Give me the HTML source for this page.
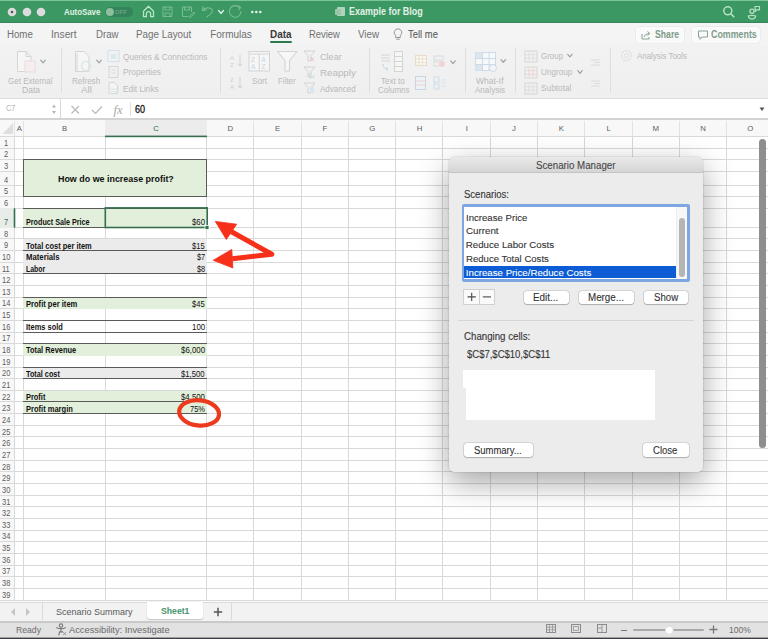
<!DOCTYPE html>
<html><head><meta charset="utf-8"><style>
html,body{margin:0;padding:0;width:768px;height:639px;overflow:hidden;background:#fff}
body{position:relative;font-family:"Liberation Sans",sans-serif}
body>div,body>svg{position:absolute}
.t{white-space:nowrap;line-height:1}
</style></head><body>
<div style="left:0px;top:0px;width:768px;height:23px;background:#3b9863"></div>
<div style="left:0px;top:0px;width:768px;height:1px;background:#7cc499"></div>
<svg style="left:7.1px;top:7px;" width="10" height="10" viewBox="0 0 10 10"><circle cx="5" cy="5" r="4.3" fill="#dcdcdc"/></svg>
<svg style="left:22px;top:7px;" width="10" height="10" viewBox="0 0 10 10"><circle cx="5" cy="5" r="4.3" fill="#dcdcdc"/></svg>
<svg style="left:36.4px;top:7px;" width="10" height="10" viewBox="0 0 10 10"><circle cx="5" cy="5" r="4.3" fill="#dcdcdc"/></svg>
<svg style="left:7.1px;top:7px;" width="10" height="10" viewBox="0 0 10 10"><circle cx="5" cy="5" r="1.3" fill="#555"/></svg>
<div style="left:0px;top:21.5px;width:768px;height:1.5px;background:#368659"></div>
<div class="t" style="left:64px;top:7.70px;font-size:9px;font-weight:bold;color:#e3f1e8;transform:scaleX(0.8769);transform-origin:left center;">AutoSave</div>
<div style="left:0px;top:23px;width:768px;height:22px;background:#f4f4f4"></div>
<div class="t" style="left:6.8px;top:29.82px;font-size:10px;font-weight:normal;color:#707070;transform:scaleX(0.9672);transform-origin:left center;">Home</div>
<div class="t" style="left:51.2px;top:29.82px;font-size:10px;font-weight:normal;color:#707070;transform:scaleX(1.0236);transform-origin:left center;">Insert</div>
<div class="t" style="left:95.6px;top:29.82px;font-size:10px;font-weight:normal;color:#707070;transform:scaleX(0.9642);transform-origin:left center;">Draw</div>
<div class="t" style="left:136.25px;top:29.82px;font-size:10px;font-weight:normal;color:#707070;transform:scaleX(0.9838);transform-origin:left center;">Page Layout</div>
<div class="t" style="left:210.2px;top:29.82px;font-size:10px;font-weight:normal;color:#707070;">Formulas</div>
<div class="t" style="left:270.1px;top:29.82px;font-size:10px;font-weight:bold;color:#3a3a3a;transform:scaleX(0.9919);transform-origin:left center;">Data</div>
<div class="t" style="left:309.4px;top:29.82px;font-size:10px;font-weight:normal;color:#707070;transform:scaleX(0.9424);transform-origin:left center;">Review</div>
<div class="t" style="left:358.4px;top:29.82px;font-size:10px;font-weight:normal;color:#707070;transform:scaleX(0.9781);transform-origin:left center;">View</div>
<div class="t" style="left:408.2px;top:29.82px;font-size:10px;font-weight:normal;color:#505050;transform:scaleX(0.9456);transform-origin:left center;">Tell me</div>
<div style="left:270px;top:41px;width:22px;height:2px;background:#2e7a4f;border-radius:1px"></div>
<div style="left:0px;top:45px;width:768px;height:54px;background:linear-gradient(#f2f2f2,#efefef)"></div>
<div style="left:0px;top:98px;width:768px;height:1px;background:#dcdcdc"></div>
<div style="left:0px;top:99px;width:768px;height:20px;background:#ffffff"></div>
<div style="left:0px;top:118px;width:768px;height:2px;background:#d3d3d3"></div>
<div style="left:0px;top:120px;width:768px;height:16px;background:#f8f8f8"></div>
<div style="left:0px;top:136px;width:15px;height:465px;background:#f8f8f8"></div>
<svg style="left:0px;top:0px;" width="768" height="639" viewBox="0 0 768 639"><rect x="14" y="136" width="1" height="465" fill="#d9d9d9"/><rect x="14" y="121" width="1" height="15" fill="#e3e3e3"/><rect x="23" y="136" width="1" height="465" fill="#d9d9d9"/><rect x="23" y="121" width="1" height="15" fill="#e3e3e3"/><rect x="105" y="136" width="1" height="465" fill="#d9d9d9"/><rect x="105" y="121" width="1" height="15" fill="#e3e3e3"/><rect x="206" y="136" width="1" height="465" fill="#d9d9d9"/><rect x="206" y="121" width="1" height="15" fill="#e3e3e3"/><rect x="253" y="136" width="1" height="465" fill="#d9d9d9"/><rect x="253" y="121" width="1" height="15" fill="#e3e3e3"/><rect x="301" y="136" width="1" height="465" fill="#d9d9d9"/><rect x="301" y="121" width="1" height="15" fill="#e3e3e3"/><rect x="348" y="136" width="1" height="465" fill="#d9d9d9"/><rect x="348" y="121" width="1" height="15" fill="#e3e3e3"/><rect x="395" y="136" width="1" height="465" fill="#d9d9d9"/><rect x="395" y="121" width="1" height="15" fill="#e3e3e3"/><rect x="442" y="136" width="1" height="465" fill="#d9d9d9"/><rect x="442" y="121" width="1" height="15" fill="#e3e3e3"/><rect x="490" y="136" width="1" height="465" fill="#d9d9d9"/><rect x="490" y="121" width="1" height="15" fill="#e3e3e3"/><rect x="537" y="136" width="1" height="465" fill="#d9d9d9"/><rect x="537" y="121" width="1" height="15" fill="#e3e3e3"/><rect x="584" y="136" width="1" height="465" fill="#d9d9d9"/><rect x="584" y="121" width="1" height="15" fill="#e3e3e3"/><rect x="632" y="136" width="1" height="465" fill="#d9d9d9"/><rect x="632" y="121" width="1" height="15" fill="#e3e3e3"/><rect x="679" y="136" width="1" height="465" fill="#d9d9d9"/><rect x="679" y="121" width="1" height="15" fill="#e3e3e3"/><rect x="726" y="136" width="1" height="465" fill="#d9d9d9"/><rect x="726" y="121" width="1" height="15" fill="#e3e3e3"/><rect x="773" y="136" width="1" height="465" fill="#d9d9d9"/><rect x="773" y="121" width="1" height="15" fill="#e3e3e3"/><rect x="0" y="136" width="768" height="1" fill="#d9d9d9"/><rect x="0" y="148" width="768" height="1" fill="#d9d9d9"/><rect x="0" y="159" width="768" height="1" fill="#d9d9d9"/><rect x="0" y="171" width="768" height="1" fill="#d9d9d9"/><rect x="0" y="185" width="768" height="1" fill="#d9d9d9"/><rect x="0" y="196" width="768" height="1" fill="#d9d9d9"/><rect x="0" y="208" width="768" height="1" fill="#d9d9d9"/><rect x="0" y="227" width="768" height="1" fill="#d9d9d9"/><rect x="0" y="238" width="768" height="1" fill="#d9d9d9"/><rect x="0" y="250" width="768" height="1" fill="#d9d9d9"/><rect x="0" y="262" width="768" height="1" fill="#d9d9d9"/><rect x="0" y="273" width="768" height="1" fill="#d9d9d9"/><rect x="0" y="285" width="768" height="1" fill="#d9d9d9"/><rect x="0" y="297" width="768" height="1" fill="#d9d9d9"/><rect x="0" y="308" width="768" height="1" fill="#d9d9d9"/><rect x="0" y="320" width="768" height="1" fill="#d9d9d9"/><rect x="0" y="332" width="768" height="1" fill="#d9d9d9"/><rect x="0" y="343" width="768" height="1" fill="#d9d9d9"/><rect x="0" y="355" width="768" height="1" fill="#d9d9d9"/><rect x="0" y="367" width="768" height="1" fill="#d9d9d9"/><rect x="0" y="378" width="768" height="1" fill="#d9d9d9"/><rect x="0" y="390" width="768" height="1" fill="#d9d9d9"/><rect x="0" y="401" width="768" height="1" fill="#d9d9d9"/><rect x="0" y="413" width="768" height="1" fill="#d9d9d9"/><rect x="0" y="425" width="768" height="1" fill="#d9d9d9"/><rect x="0" y="436" width="768" height="1" fill="#d9d9d9"/><rect x="0" y="448" width="768" height="1" fill="#d9d9d9"/><rect x="0" y="460" width="768" height="1" fill="#d9d9d9"/><rect x="0" y="471" width="768" height="1" fill="#d9d9d9"/><rect x="0" y="483" width="768" height="1" fill="#d9d9d9"/><rect x="0" y="495" width="768" height="1" fill="#d9d9d9"/><rect x="0" y="506" width="768" height="1" fill="#d9d9d9"/><rect x="0" y="518" width="768" height="1" fill="#d9d9d9"/><rect x="0" y="530" width="768" height="1" fill="#d9d9d9"/><rect x="0" y="541" width="768" height="1" fill="#d9d9d9"/><rect x="0" y="553" width="768" height="1" fill="#d9d9d9"/><rect x="0" y="565" width="768" height="1" fill="#d9d9d9"/><rect x="0" y="576" width="768" height="1" fill="#d9d9d9"/><rect x="0" y="588" width="768" height="1" fill="#d9d9d9"/><rect x="0" y="600" width="768" height="1" fill="#d9d9d9"/></svg>
<div style="left:0px;top:601px;width:768px;height:1px;background:#fbfbfb"></div>
<div style="left:0px;top:603px;width:768px;height:18px;background:#f2f2f2"></div>
<div style="left:0px;top:602px;width:768px;height:1px;background:#dadada"></div>
<div style="left:0px;top:621px;width:768px;height:18px;background:linear-gradient(#e1e1e1,#e3e3e3)"></div>
<div style="left:0px;top:621px;width:768px;height:1.6px;background:#c9c9c9"></div>
<svg style="left:0px;top:636px;" width="768" height="3" viewBox="0 0 768 3"><rect x="0" y="1.6" width="768" height="1.4" fill="#3d3d45"/></svg>
<div style="left:105.2px;top:7px;width:28px;height:10.2px;background:#33845a;border-radius:5.1px"></div>
<svg style="left:105.2px;top:7px;" width="29" height="11" viewBox="0 0 29 11"><circle cx="4.9" cy="5.1" r="4" fill="#8fbf9f"/></svg>
<div class="t" style="left:115px;top:9.27px;font-size:6px;font-weight:bold;color:#6fa384;">OFF</div>
<svg style="left:141px;top:4px;" width="15" height="15" viewBox="0 0 15 15"><path d="M2.5 7.3 L7.5 2.3 L12.5 7.3 V12.7 H9.6 V9.8 A2.1 2.1 0 0 0 5.4 9.8 V12.7 H2.5 Z" fill="none" stroke="#b9e6c8" stroke-width="1.25" stroke-linejoin="round"/></svg>
<svg style="left:160px;top:4px;" width="15" height="15" viewBox="0 0 15 15"><path d="M3 3 H12 V12.5 H3 Z M5 3 V6 H10 V3 M5 12.5 V9 H10 V12.5" fill="none" stroke="#8cc9a2" stroke-width="1" stroke-linejoin="round" opacity="0.75"/></svg>
<svg style="left:180px;top:4px;" width="15" height="15" viewBox="0 0 15 15"><path d="M2.5 3 H11.5 V8 M8 12.5 H2.5 V3 M4.5 3 V6 H9.5 V3 M9 12.8 L13.8 8 L14.8 9 L10 13.8 Z" fill="none" stroke="#8cc9a2" stroke-width="1" stroke-linejoin="round" opacity="0.75"/></svg>
<svg style="left:199px;top:4px;" width="16" height="15" viewBox="0 0 16 15"><path d="M4 2.5 L3.5 6.5 L7.5 6 M3.7 6.3 C6 3.5 10.5 3 13 5.5 C14 7.5 12 10.5 7.5 13" fill="none" stroke="#8cc9a2" stroke-width="1.1" stroke-linecap="round" stroke-linejoin="round" opacity="0.75"/></svg>
<svg style="left:217px;top:8px;" width="8" height="8" viewBox="0 0 8 8"><polyline points="1.7000000000000002,2.62 4,5.38 6.3,2.62" fill="none" stroke="#e8f5ec" stroke-width="1.5" stroke-linecap="round" stroke-linejoin="round"/></svg>
<svg style="left:228px;top:4px;" width="16" height="15" viewBox="0 0 16 15"><path d="M13 7.5 A5.8 5.8 0 1 1 11.5 3.5 M10.2 1.8 L12.5 3.6 L10.5 5.8" fill="none" stroke="#8cc9a2" stroke-width="1.1" stroke-linecap="round" opacity="0.75"/></svg>
<svg style="left:249px;top:8px;" width="14" height="8" viewBox="0 0 14 8"><circle cx="3.3" cy="4" r="1.25" fill="#e8f5ec"/><circle cx="7.3" cy="4" r="1.25" fill="#e8f5ec"/><circle cx="11.3" cy="4" r="1.25" fill="#e8f5ec"/></svg>
<svg style="left:334px;top:5px;" width="13" height="13" viewBox="0 0 13 13"><rect x="3" y="2" width="8" height="9" rx="1" fill="#bcd9c6" opacity="0.9"/><rect x="1" y="4" width="6" height="6" rx="1" fill="#9cc6ab"/></svg>
<div class="t" style="left:349.2px;top:7.02px;font-size:10px;font-weight:bold;color:#e3f1e8;transform:scaleX(0.8974);transform-origin:left center;">Example for Blog</div>
<svg style="left:721px;top:4px;" width="15" height="15" viewBox="0 0 15 15"><circle cx="6.8" cy="6.8" r="4" fill="none" stroke="#b6e0c4" stroke-width="1.5"/><path d="M9.8 9.8 L12.8 12.8" stroke="#b6e0c4" stroke-width="1.6" stroke-linecap="round"/></svg>
<svg style="left:745px;top:3px;" width="17" height="17" viewBox="0 0 17 17"><circle cx="7" cy="8.3" r="2.1" fill="none" stroke="#b6e0c4" stroke-width="1.3"/><path d="M3.3 13 Q7 11.6 10.7 13 Q10.4 16 7 16 Q3.6 16 3.3 13 Z" fill="none" stroke="#b6e0c4" stroke-width="1.3"/><path d="M10 3.5 H14.5 V6.8 H11.8 L10.3 8.3 Z" fill="none" stroke="#b6e0c4" stroke-width="1.2" stroke-linejoin="round"/></svg>
<svg style="left:392px;top:27px;" width="12" height="14" viewBox="0 0 12 14"><path d="M6 1.8 A3.8 3.8 0 0 1 8.3 8.6 V10.5 H3.7 V8.6 A3.8 3.8 0 0 1 6 1.8 Z M4.3 12.2 H7.7" fill="none" stroke="#8a8a8a" stroke-width="0.9"/></svg>
<div style="left:636.4px;top:26.7px;width:47.2px;height:16.4px;background:#fafafa;border-radius:3px;box-shadow:0 0 0 0.5px #e2e2e2"></div>
<svg style="left:640px;top:29px;" width="12" height="12" viewBox="0 0 12 12"><path d="M2 5 V10 H9 V8 M4 8 Q5 4.5 9.5 4.5 M7.5 2.5 L9.8 4.5 L7.5 6.5" fill="none" stroke="#87a292" stroke-width="1"/></svg>
<div class="t" style="left:654.7px;top:30.12px;font-size:10px;font-weight:bold;color:#7f9b8a;transform:scaleX(0.8671);transform-origin:left center;">Share</div>
<div style="left:692.3px;top:26.7px;width:68px;height:16.4px;background:#fafafa;border-radius:3px;box-shadow:0 0 0 0.5px #e2e2e2"></div>
<svg style="left:697px;top:29px;" width="12" height="12" viewBox="0 0 12 12"><path d="M1.5 2 H10.5 V8 H5 L3 10.3 V8 H1.5 Z" fill="none" stroke="#87a292" stroke-width="1" stroke-linejoin="round"/></svg>
<div class="t" style="left:710.6px;top:30.12px;font-size:10px;font-weight:bold;color:#7f9b8a;transform:scaleX(0.8863);transform-origin:left center;">Comments</div>
<div style="left:61px;top:48px;width:1px;height:45px;background:#dedede"></div>
<div style="left:220px;top:48px;width:1px;height:45px;background:#dedede"></div>
<div style="left:368.5px;top:48px;width:1px;height:45px;background:#dedede"></div>
<div style="left:465px;top:48px;width:1px;height:45px;background:#dedede"></div>
<div style="left:515px;top:48px;width:1px;height:45px;background:#dedede"></div>
<div style="left:610px;top:48px;width:1px;height:45px;background:#dedede"></div>
<svg style="left:14px;top:50px;opacity:0.8;" width="34" height="24" viewBox="0 0 34 24"><path d="M3.5 1.5 H12 L17 6.5 V21.5 H3.5 Z M12 1.5 V6.5 H17" fill="#f7f7f7" stroke="#cfcfcf" stroke-width="1"/><rect x="11" y="11" width="10" height="11" fill="#f7eeee" stroke="#e6d2d2" stroke-width="0.8"/><polyline points="26.7,10.120000000000001 29,12.879999999999999 31.3,10.120000000000001" fill="none" stroke="#8d8d8d" stroke-width="1.2" stroke-linecap="round" stroke-linejoin="round"/></svg>
<div class="t" style="left:7.5px;top:77.40px;font-size:9px;font-weight:normal;color:#b9b9b9;transform:scaleX(0.8896);transform-origin:left center;">Get External</div>
<div class="t" style="left:22px;top:86.10px;font-size:9px;font-weight:normal;color:#b9b9b9;transform:scaleX(0.9468);transform-origin:left center;">Data</div>
<svg style="left:72px;top:50px;opacity:0.8;" width="34" height="24" viewBox="0 0 34 24"><path d="M5 3.5 V21 M3.5 1.5 H12 L17 6.5 V21.5 H3.5 Z" fill="#f7f7f7" stroke="#cfcfcf" stroke-width="1"/><circle cx="14" cy="16" r="4.5" fill="none" stroke="#d7e6dc" stroke-width="1.6"/><polyline points="24.7,10.120000000000001 27,12.879999999999999 29.3,10.120000000000001" fill="none" stroke="#8d8d8d" stroke-width="1.2" stroke-linecap="round" stroke-linejoin="round"/></svg>
<div class="t" style="left:71.9px;top:77.40px;font-size:9px;font-weight:normal;color:#b9b9b9;transform:scaleX(0.8917);transform-origin:left center;">Refresh</div>
<div class="t" style="left:80.5px;top:86.10px;font-size:9px;font-weight:normal;color:#b9b9b9;transform:scaleX(1.0998);transform-origin:left center;">All</div>
<svg style="left:106px;top:49px;opacity:0.8;" width="16" height="46" viewBox="0 0 16 46"><rect x="2" y="1.5" width="11" height="11" fill="#eef4f8" stroke="#cfdde6" stroke-width="1"/><rect x="5" y="5" width="5" height="5" fill="#d9e6ee"/><rect x="3" y="17.5" width="9" height="11" fill="none" stroke="#d0d0d0" stroke-width="1"/><path d="M5.5 21 H9.5 M5.5 24 H9.5" stroke="#d8d8d8"/><path d="M3 33.5 H8.5 L11.5 36.5 V44.5 H3 Z" fill="#f4f6f8" stroke="#d0d0d0" stroke-width="1"/><path d="M4.5 40 H13 M4.5 42.5 H13" stroke="#d6e0e8"/></svg>
<div class="t" style="left:123.4px;top:52.60px;font-size:9px;font-weight:normal;color:#b9b9b9;transform:scaleX(0.9120);transform-origin:left center;">Queries &amp; Connections</div>
<div class="t" style="left:123.4px;top:68.40px;font-size:9px;font-weight:normal;color:#b9b9b9;transform:scaleX(0.9264);transform-origin:left center;">Properties</div>
<div class="t" style="left:123.4px;top:84.60px;font-size:9px;font-weight:normal;color:#b9b9b9;transform:scaleX(0.9124);transform-origin:left center;">Edit Links</div>
<svg style="left:229px;top:52px;opacity:0.8;" width="16" height="40" viewBox="0 0 16 40"><text x="1" y="8" font-size="6" fill="#c8c8c8" font-family="Liberation Sans">A</text><text x="1" y="14.5" font-size="6" fill="#c8c8c8" font-family="Liberation Sans">Z</text><path d="M11 3 V14 M8.8 11.5 L11 14 L13.2 11.5" fill="none" stroke="#c6c6c6" stroke-width="0.9"/><text x="1" y="30" font-size="6" fill="#c8c8c8" font-family="Liberation Sans">Z</text><text x="1" y="36.5" font-size="6" fill="#c8c8c8" font-family="Liberation Sans">A</text><path d="M11 25 V36 M8.8 33.5 L11 36 L13.2 33.5" fill="none" stroke="#c6c6c6" stroke-width="0.9"/></svg>
<svg style="left:248px;top:50px;opacity:0.8;" width="23" height="23" viewBox="0 0 23 23"><rect x="1" y="1.5" width="20.5" height="19.5" fill="#f8f8f8" stroke="#cdcdcd" stroke-width="1"/><path d="M1 4 H21.5 M11.25 4 V21" stroke="#cdcdcd" stroke-width="1"/><text x="3" y="12" font-size="6.5" fill="#c9c9c9" font-family="Liberation Sans">Z</text><text x="3" y="19" font-size="6.5" fill="#bcd2e4" font-family="Liberation Sans">A</text><text x="13.5" y="12" font-size="6.5" fill="#bcd2e4" font-family="Liberation Sans">A</text><text x="13.5" y="19" font-size="6.5" fill="#c9c9c9" font-family="Liberation Sans">Z</text></svg>
<div class="t" style="left:251.5px;top:77.40px;font-size:9px;font-weight:normal;color:#b9b9b9;transform:scaleX(0.9148);transform-origin:left center;">Sort</div>
<svg style="left:276px;top:50px;opacity:0.8;" width="23" height="23" viewBox="0 0 23 23"><path d="M1.5 1.5 H21 L13.5 10.5 V21 H9 V10.5 Z" fill="#f9f9f9" stroke="#cdcdcd" stroke-width="1.1" stroke-linejoin="round"/></svg>
<div class="t" style="left:277.9px;top:77.40px;font-size:9px;font-weight:normal;color:#b9b9b9;transform:scaleX(0.8850);transform-origin:left center;">Filter</div>
<svg style="left:303px;top:50px;opacity:0.8;" width="14" height="44" viewBox="0 0 14 44"><path d="M1 1 H12 L8 5.5 V11 H5 V5.5 Z" fill="none" stroke="#cdcdcd" stroke-width="1"/><path d="M7.5 7.5 L11 11 M11 7.5 L7.5 11" stroke="#eab0b0" stroke-width="1"/><path d="M1 17 H12 L8 21.5 V27 H5 V21.5 Z" fill="none" stroke="#cdcdcd" stroke-width="1"/><path d="M8 23 A2.5 2.5 0 1 0 11 25" fill="none" stroke="#b9d6c3" stroke-width="1"/><path d="M1 33 H12 L8 37.5 V43 H5 V37.5 Z" fill="none" stroke="#cdcdcd" stroke-width="1"/><rect x="7" y="37" width="4" height="6" fill="#d5e3ee"/></svg>
<div class="t" style="left:320.2px;top:52.80px;font-size:9px;font-weight:normal;color:#b9b9b9;transform:scaleX(1.0136);transform-origin:left center;">Clear</div>
<div class="t" style="left:320.2px;top:68.70px;font-size:9px;font-weight:normal;color:#b9b9b9;transform:scaleX(1.0842);transform-origin:left center;">Reapply</div>
<div class="t" style="left:320.2px;top:84.70px;font-size:9px;font-weight:normal;color:#b9b9b9;transform:scaleX(0.8943);transform-origin:left center;">Advanced</div>
<svg style="left:379px;top:50px;opacity:0.8;" width="28" height="23" viewBox="0 0 28 23"><path d="M2 5 H11 M2 8 H11 M2 11 H11" stroke="#d0d0d0" stroke-width="1"/><path d="M4 14 Q4 19 9 19 M7 17 L9 19 L7 21" fill="none" stroke="#bcd3e2" stroke-width="1"/><rect x="15.5" y="1.5" width="8" height="20" fill="#f8f8f8" stroke="#cdcdcd" stroke-width="1"/><path d="M15.5 6.5 H23.5 M15.5 11.5 H23.5 M15.5 16.5 H23.5" stroke="#cdcdcd"/></svg>
<div class="t" style="left:381px;top:77.20px;font-size:9px;font-weight:normal;color:#b9b9b9;transform:scaleX(0.8942);transform-origin:left center;">Text to</div>
<div class="t" style="left:377.5px;top:85.60px;font-size:9px;font-weight:normal;color:#b9b9b9;transform:scaleX(0.8870);transform-origin:left center;">Columns</div>
<svg style="left:413px;top:52px;opacity:0.8;" width="46" height="40" viewBox="0 0 46 40"><rect x="2.5" y="3.5" width="11" height="10" fill="#fbf7ef" stroke="#e6d7bf" stroke-width="1"/><path d="M2.5 7 H13.5 M2.5 10.5 H13.5 M6 3.5 V13.5 M9.5 3.5 V13.5" stroke="#e6d7bf" stroke-width="0.7"/><rect x="21" y="4" width="9" height="4" fill="none" stroke="#d6d6d6"/><rect x="21" y="10" width="9" height="4" fill="none" stroke="#d6d6d6"/><circle cx="29" cy="12" r="3" fill="#f1cfcf"/><polyline points="37.7,8.920000000000002 40,11.68 42.3,8.920000000000002" fill="none" stroke="#8d8d8d" stroke-width="1.2" stroke-linecap="round" stroke-linejoin="round"/><rect x="2.5" y="24.5" width="10" height="13" fill="#eef3f8" stroke="#bcd0e2" stroke-width="1"/><path d="M2.5 29 H12.5 M2.5 33 H12.5" stroke="#e8c0c0" stroke-width="0.8"/><rect x="21" y="25" width="5" height="5" fill="none" stroke="#c8d8e8"/><rect x="21" y="32" width="5" height="5" fill="none" stroke="#c8d8e8"/><path d="M28 28 H33 M28 31 H33 M28 34 H33" stroke="#d8e0e8"/></svg>
<svg style="left:474px;top:51px;opacity:0.8;" width="34" height="23" viewBox="0 0 34 23"><rect x="1.5" y="1.5" width="20" height="18" fill="#f8fafc" stroke="#c6d6e4" stroke-width="1"/><rect x="1.5" y="1.5" width="7" height="6" fill="#d5e3ef"/><rect x="1.5" y="13.5" width="7" height="6" fill="#d5e3ef"/><path d="M1.5 7.5 H21.5 M1.5 13.5 H21.5 M8.5 1.5 V19.5 M15 1.5 V19.5" stroke="#c6d6e4" stroke-width="1"/><circle cx="19" cy="17" r="3.5" fill="#f4f6f8" stroke="#c6d6e4"/><polyline points="27.0,8.620000000000001 29.3,11.379999999999999 31.6,8.620000000000001" fill="none" stroke="#8d8d8d" stroke-width="1.2" stroke-linecap="round" stroke-linejoin="round"/></svg>
<div class="t" style="left:476px;top:77.20px;font-size:9px;font-weight:normal;color:#b9b9b9;transform:scaleX(0.9516);transform-origin:left center;">What-If</div>
<div class="t" style="left:474.8px;top:85.60px;font-size:9px;font-weight:normal;color:#b9b9b9;transform:scaleX(0.8952);transform-origin:left center;">Analysis</div>
<svg style="left:523px;top:49px;opacity:0.8;" width="16" height="46" viewBox="0 0 16 46"><rect x="2" y="2" width="12" height="11" fill="none" stroke="#d0d0d0"/><path d="M2 5.7 H14 M2 9.3 H14 M6 2 V13 M10 2 V13" stroke="#d8d8d8" stroke-width="0.8"/><rect x="2" y="18" width="12" height="11" fill="none" stroke="#d4d4d4"/><path d="M2 21.7 H14 M2 25.3 H14 M6 18 V29 M10 18 V29" stroke="#ecc8c8" stroke-width="0.8"/><rect x="2" y="34" width="12" height="11" fill="none" stroke="#d0d0d0"/><path d="M2 37.7 H14 M2 41.3 H14 M6 34 V45 M10 34 V45" stroke="#d8d8d8" stroke-width="0.8"/></svg>
<div class="t" style="left:541px;top:52.00px;font-size:9px;font-weight:normal;color:#b9b9b9;transform:scaleX(0.8875);transform-origin:left center;">Group</div>
<div class="t" style="left:541px;top:68.40px;font-size:9px;font-weight:normal;color:#b9b9b9;transform:scaleX(0.9066);transform-origin:left center;">Ungroup</div>
<div class="t" style="left:541px;top:84.40px;font-size:9px;font-weight:normal;color:#b9b9b9;transform:scaleX(0.9205);transform-origin:left center;">Subtotal</div>
<svg style="left:565px;top:51px;opacity:0.8;" width="20" height="26" viewBox="0 0 20 26"><polyline points="2.7,3.2799999999999994 4.9,5.92 7.1000000000000005,3.2799999999999994" fill="none" stroke="#8d8d8d" stroke-width="1.2" stroke-linecap="round" stroke-linejoin="round"/><polyline points="12.8,19.68 15,22.32 17.2,19.68" fill="none" stroke="#8d8d8d" stroke-width="1.2" stroke-linecap="round" stroke-linejoin="round"/></svg>
<svg style="left:588px;top:54px;opacity:0.8;" width="14" height="36" viewBox="0 0 14 36"><path d="M3 6 H12 M6 8.5 H12 M3 11 H12" stroke="#d4d4d4" stroke-width="0.9"/><path d="M3 27 H12 M6 29.5 H12 M3 32 H12" stroke="#d4d4d4" stroke-width="0.9"/></svg>
<svg style="left:619px;top:48px;opacity:0.8;" width="15" height="15" viewBox="0 0 15 15"><circle cx="7.5" cy="7.5" r="5" fill="none" stroke="#dcdcdc" stroke-width="1.3" stroke-dasharray="2 1"/><circle cx="7.5" cy="7.5" r="2" fill="none" stroke="#dcdcdc"/></svg>
<div class="t" style="left:636.7px;top:51.50px;font-size:9px;font-weight:normal;color:#b9b9b9;transform:scaleX(0.8773);transform-origin:left center;">Analysis Tools</div>
<div class="t" style="left:6.3px;top:104.40px;font-size:9px;font-weight:normal;color:#b4b4b4;transform:scaleX(0.8084);transform-origin:left center;">C7</div>
<svg style="left:50px;top:101px;" width="8" height="16" viewBox="0 0 8 16"><path d="M2 6.5 L4 3.5 L6 6.5 Z M2 10 L4 13 L6 10 Z" fill="#b5b5b5"/></svg>
<div style="left:60px;top:99px;width:1px;height:19px;background:#d8d8d8"></div>
<svg style="left:70px;top:105px;" width="11" height="10" viewBox="0 0 11 10"><path d="M1.5 1 L9 8.5 M9 1 L1.5 8.5" stroke="#b9b9b9" stroke-width="1.2"/></svg>
<svg style="left:91px;top:105px;" width="12" height="10" viewBox="0 0 12 10"><path d="M1 5 L4.5 8.5 L11 1.5" fill="none" stroke="#b9b9b9" stroke-width="1.2"/></svg>
<div class="t" style="left:113.5px;top:103.89px;font-size:12.5px;font-weight:normal;color:#a9a9a9;font-family:'Liberation Serif',serif;font-style:italic;">fx</div>
<div style="left:129.5px;top:102px;width:1px;height:14px;background:#e0e0e0"></div>
<div class="t" style="left:135.2px;top:104.47px;font-size:10.5px;font-weight:normal;color:#151515;transform:scaleX(0.8648);transform-origin:left center;-webkit-text-stroke:0.3px #151515;">60</div>
<svg style="left:757px;top:104px;" width="10" height="10" viewBox="0 0 10 10"><path d="M2.5 3.5 H7.5 L5 7 Z" fill="#555"/></svg>
<svg style="left:0px;top:120px;" width="15" height="16" viewBox="0 0 15 16"><path d="M13 3 V14 H2.5 Z" fill="#dedede"/></svg>
<div style="left:105px;top:120px;width:102px;height:16px;background:#ececec"></div>
<div class="t" style="left:16.6987px;top:125.29px;font-size:7.8px;font-weight:normal;color:#5c5c5c;">A</div>
<div class="t" style="left:61.8987px;top:125.29px;font-size:7.8px;font-weight:normal;color:#5c5c5c;">B</div>
<div class="t" style="left:153.284px;top:125.29px;font-size:7.8px;font-weight:normal;color:#356f4e;">C</div>
<div class="t" style="left:227.619px;top:125.29px;font-size:7.8px;font-weight:normal;color:#5c5c5c;">D</div>
<div class="t" style="left:275.104px;top:125.29px;font-size:7.8px;font-weight:normal;color:#5c5c5c;">E</div>
<div class="t" style="left:322.593px;top:125.29px;font-size:7.8px;font-weight:normal;color:#5c5c5c;">F</div>
<div class="t" style="left:369.211px;top:125.29px;font-size:7.8px;font-weight:normal;color:#5c5c5c;">G</div>
<div class="t" style="left:416.699px;top:125.29px;font-size:7.8px;font-weight:normal;color:#5c5c5c;">H</div>
<div class="t" style="left:465.701px;top:125.29px;font-size:7.8px;font-weight:normal;color:#5c5c5c;">I</div>
<div class="t" style="left:512.105px;top:125.29px;font-size:7.8px;font-weight:normal;color:#5c5c5c;">J</div>
<div class="t" style="left:558.724px;top:125.29px;font-size:7.8px;font-weight:normal;color:#5c5c5c;">K</div>
<div class="t" style="left:606.426px;top:125.29px;font-size:7.8px;font-weight:normal;color:#5c5c5c;">L</div>
<div class="t" style="left:652.616px;top:125.29px;font-size:7.8px;font-weight:normal;color:#5c5c5c;">M</div>
<div class="t" style="left:700.319px;top:125.29px;font-size:7.8px;font-weight:normal;color:#5c5c5c;">N</div>
<div class="t" style="left:747.371px;top:125.29px;font-size:7.8px;font-weight:normal;color:#5c5c5c;">O</div>
<svg style="left:105px;top:134px;" width="102" height="4" viewBox="0 0 102 4"><rect x="0" y="1.6" width="102" height="1.6" fill="#356f4e"/></svg>
<div style="left:0px;top:208px;width:14px;height:20px;background:#e9ede9"></div>
<div class="t" style="left:4.21999px;top:138.80px;font-size:8.8px;font-weight:normal;color:#5c5c5c;transform:scaleX(0.8500);transform-origin:left center;">1</div>
<div class="t" style="left:4.21999px;top:150.00px;font-size:8.8px;font-weight:normal;color:#5c5c5c;transform:scaleX(0.8500);transform-origin:left center;">2</div>
<div class="t" style="left:4.21999px;top:162.10px;font-size:8.8px;font-weight:normal;color:#5c5c5c;transform:scaleX(0.8500);transform-origin:left center;">3</div>
<div class="t" style="left:4.21999px;top:176.10px;font-size:8.8px;font-weight:normal;color:#5c5c5c;transform:scaleX(0.8500);transform-origin:left center;">4</div>
<div class="t" style="left:4.21999px;top:187.30px;font-size:8.8px;font-weight:normal;color:#5c5c5c;transform:scaleX(0.8500);transform-origin:left center;">5</div>
<div class="t" style="left:4.21999px;top:198.90px;font-size:8.8px;font-weight:normal;color:#5c5c5c;transform:scaleX(0.8500);transform-origin:left center;">6</div>
<div class="t" style="left:4.21999px;top:217.90px;font-size:8.8px;font-weight:normal;color:#356f4e;transform:scaleX(0.8500);transform-origin:left center;">7</div>
<div class="t" style="left:4.21999px;top:229.55px;font-size:8.8px;font-weight:normal;color:#5c5c5c;transform:scaleX(0.8500);transform-origin:left center;">8</div>
<div class="t" style="left:4.21999px;top:241.20px;font-size:8.8px;font-weight:normal;color:#5c5c5c;transform:scaleX(0.8500);transform-origin:left center;">9</div>
<div class="t" style="left:2.13998px;top:252.85px;font-size:8.8px;font-weight:normal;color:#5c5c5c;transform:scaleX(0.8500);transform-origin:left center;">10</div>
<div class="t" style="left:2.13998px;top:264.50px;font-size:8.8px;font-weight:normal;color:#5c5c5c;transform:scaleX(0.8500);transform-origin:left center;">11</div>
<div class="t" style="left:2.13998px;top:276.15px;font-size:8.8px;font-weight:normal;color:#5c5c5c;transform:scaleX(0.8500);transform-origin:left center;">12</div>
<div class="t" style="left:2.13998px;top:287.80px;font-size:8.8px;font-weight:normal;color:#5c5c5c;transform:scaleX(0.8500);transform-origin:left center;">13</div>
<div class="t" style="left:2.13998px;top:299.45px;font-size:8.8px;font-weight:normal;color:#5c5c5c;transform:scaleX(0.8500);transform-origin:left center;">14</div>
<div class="t" style="left:2.13998px;top:311.10px;font-size:8.8px;font-weight:normal;color:#5c5c5c;transform:scaleX(0.8500);transform-origin:left center;">15</div>
<div class="t" style="left:2.13998px;top:322.75px;font-size:8.8px;font-weight:normal;color:#5c5c5c;transform:scaleX(0.8500);transform-origin:left center;">16</div>
<div class="t" style="left:2.13998px;top:334.40px;font-size:8.8px;font-weight:normal;color:#5c5c5c;transform:scaleX(0.8500);transform-origin:left center;">17</div>
<div class="t" style="left:2.13998px;top:346.05px;font-size:8.8px;font-weight:normal;color:#5c5c5c;transform:scaleX(0.8500);transform-origin:left center;">18</div>
<div class="t" style="left:2.13998px;top:357.70px;font-size:8.8px;font-weight:normal;color:#5c5c5c;transform:scaleX(0.8500);transform-origin:left center;">19</div>
<div class="t" style="left:2.13998px;top:369.35px;font-size:8.8px;font-weight:normal;color:#5c5c5c;transform:scaleX(0.8500);transform-origin:left center;">20</div>
<div class="t" style="left:2.13998px;top:381.00px;font-size:8.8px;font-weight:normal;color:#5c5c5c;transform:scaleX(0.8500);transform-origin:left center;">21</div>
<div class="t" style="left:2.13998px;top:392.65px;font-size:8.8px;font-weight:normal;color:#5c5c5c;transform:scaleX(0.8500);transform-origin:left center;">22</div>
<div class="t" style="left:2.13998px;top:404.30px;font-size:8.8px;font-weight:normal;color:#5c5c5c;transform:scaleX(0.8500);transform-origin:left center;">23</div>
<div class="t" style="left:2.13998px;top:415.95px;font-size:8.8px;font-weight:normal;color:#5c5c5c;transform:scaleX(0.8500);transform-origin:left center;">24</div>
<div class="t" style="left:2.13998px;top:427.60px;font-size:8.8px;font-weight:normal;color:#5c5c5c;transform:scaleX(0.8500);transform-origin:left center;">25</div>
<div class="t" style="left:2.13998px;top:439.25px;font-size:8.8px;font-weight:normal;color:#5c5c5c;transform:scaleX(0.8500);transform-origin:left center;">26</div>
<div class="t" style="left:2.13998px;top:450.90px;font-size:8.8px;font-weight:normal;color:#5c5c5c;transform:scaleX(0.8500);transform-origin:left center;">27</div>
<div class="t" style="left:2.13998px;top:462.55px;font-size:8.8px;font-weight:normal;color:#5c5c5c;transform:scaleX(0.8500);transform-origin:left center;">28</div>
<div class="t" style="left:2.13998px;top:474.20px;font-size:8.8px;font-weight:normal;color:#5c5c5c;transform:scaleX(0.8500);transform-origin:left center;">29</div>
<div class="t" style="left:2.13998px;top:485.85px;font-size:8.8px;font-weight:normal;color:#5c5c5c;transform:scaleX(0.8500);transform-origin:left center;">30</div>
<div class="t" style="left:2.13998px;top:497.50px;font-size:8.8px;font-weight:normal;color:#5c5c5c;transform:scaleX(0.8500);transform-origin:left center;">31</div>
<div class="t" style="left:2.13998px;top:509.15px;font-size:8.8px;font-weight:normal;color:#5c5c5c;transform:scaleX(0.8500);transform-origin:left center;">32</div>
<div class="t" style="left:2.13998px;top:520.80px;font-size:8.8px;font-weight:normal;color:#5c5c5c;transform:scaleX(0.8500);transform-origin:left center;">33</div>
<div class="t" style="left:2.13998px;top:532.45px;font-size:8.8px;font-weight:normal;color:#5c5c5c;transform:scaleX(0.8500);transform-origin:left center;">34</div>
<div class="t" style="left:2.13998px;top:544.10px;font-size:8.8px;font-weight:normal;color:#5c5c5c;transform:scaleX(0.8500);transform-origin:left center;">35</div>
<div class="t" style="left:2.13998px;top:555.75px;font-size:8.8px;font-weight:normal;color:#5c5c5c;transform:scaleX(0.8500);transform-origin:left center;">36</div>
<div class="t" style="left:2.13998px;top:567.40px;font-size:8.8px;font-weight:normal;color:#5c5c5c;transform:scaleX(0.8500);transform-origin:left center;">37</div>
<div class="t" style="left:2.13998px;top:579.05px;font-size:8.8px;font-weight:normal;color:#5c5c5c;transform:scaleX(0.8500);transform-origin:left center;">38</div>
<div class="t" style="left:2.13998px;top:590.70px;font-size:8.8px;font-weight:normal;color:#5c5c5c;transform:scaleX(0.8500);transform-origin:left center;">39</div>
<svg style="left:12px;top:207px;" width="4" height="22" viewBox="0 0 4 22"><rect x="1.7" y="1.3" width="1.6" height="19.4" fill="#356f4e"/></svg>
<div style="left:23px;top:159px;width:184px;height:38px;background:#e2efda;border:1px solid #5a5a5a;box-sizing:border-box"></div>
<div class="t" style="left:57.9px;top:174.26px;font-size:9.9px;font-weight:bold;color:#111;transform:scaleX(0.9020);transform-origin:left center;">How do we increase profit?</div>
<div style="left:23px;top:209px;width:184px;height:19px;background:#e2efda"></div>
<div style="left:23px;top:208px;width:184px;height:1px;background:#5a5a5a"></div>
<div style="left:23px;top:227px;width:184px;height:1px;background:#5a5a5a"></div>
<div style="left:23px;top:239px;width:184px;height:12px;background:#ebebeb"></div>
<div style="left:23px;top:251px;width:184px;height:12px;background:#ebebeb"></div>
<div style="left:23px;top:263px;width:184px;height:11px;background:#ebebeb"></div>
<div style="left:23px;top:250px;width:184px;height:1px;background:#5a5a5a"></div>
<div style="left:23px;top:273px;width:184px;height:1px;background:#5a5a5a"></div>
<div style="left:23px;top:298px;width:184px;height:11px;background:#e2efda"></div>
<div style="left:23px;top:297px;width:184px;height:1px;background:#5a5a5a"></div>
<div style="left:23px;top:320px;width:184px;height:1px;background:#5a5a5a"></div>
<div style="left:23px;top:332px;width:184px;height:1px;background:#5a5a5a"></div>
<div style="left:23px;top:344px;width:184px;height:12px;background:#e2efda"></div>
<div style="left:23px;top:343px;width:184px;height:1px;background:#5a5a5a"></div>
<div style="left:23px;top:368px;width:184px;height:11px;background:#ebebeb"></div>
<div style="left:23px;top:367px;width:184px;height:1px;background:#5a5a5a"></div>
<div style="left:23px;top:378px;width:184px;height:1px;background:#5a5a5a"></div>
<div style="left:23px;top:391px;width:184px;height:11px;background:#e2efda"></div>
<div style="left:23px;top:402px;width:184px;height:12px;background:#e2efda"></div>
<div style="left:23px;top:401px;width:184px;height:1px;background:#5a5a5a"></div>
<div style="left:23px;top:413px;width:184px;height:1px;background:#5a5a5a"></div>
<div class="t" style="left:25.6px;top:218.25px;font-size:8.7px;font-weight:bold;color:#111;transform:scaleX(0.8286);transform-origin:left center;">Product Sale Price</div>
<div class="t" style="left:192px;top:218.25px;font-size:8.7px;font-weight:normal;color:#111;transform:scaleX(0.8956);transform-origin:left center;">$60</div>
<div class="t" style="left:25.6px;top:241.55px;font-size:8.7px;font-weight:bold;color:#111;transform:scaleX(0.8585);transform-origin:left center;">Total cost per item</div>
<div class="t" style="left:192.4px;top:241.55px;font-size:8.7px;font-weight:normal;color:#111;transform:scaleX(0.8680);transform-origin:left center;">$15</div>
<div class="t" style="left:25.6px;top:253.20px;font-size:8.7px;font-weight:bold;color:#111;transform:scaleX(0.8908);transform-origin:left center;">Materials</div>
<div class="t" style="left:196.8px;top:253.20px;font-size:8.7px;font-weight:normal;color:#111;transform:scaleX(0.8474);transform-origin:left center;">$7</div>
<div class="t" style="left:25.6px;top:264.85px;font-size:8.7px;font-weight:bold;color:#111;transform:scaleX(0.7903);transform-origin:left center;">Labor</div>
<div class="t" style="left:196.8px;top:264.85px;font-size:8.7px;font-weight:normal;color:#111;transform:scaleX(0.8474);transform-origin:left center;">$8</div>
<div class="t" style="left:25.6px;top:299.80px;font-size:8.7px;font-weight:bold;color:#111;transform:scaleX(0.8715);transform-origin:left center;">Profit per item</div>
<div class="t" style="left:192.4px;top:299.80px;font-size:8.7px;font-weight:normal;color:#111;transform:scaleX(0.8680);transform-origin:left center;">$45</div>
<div class="t" style="left:25.6px;top:323.10px;font-size:8.7px;font-weight:bold;color:#111;transform:scaleX(0.8576);transform-origin:left center;">Items sold</div>
<div class="t" style="left:191.8px;top:323.10px;font-size:8.7px;font-weight:normal;color:#111;transform:scaleX(0.9094);transform-origin:left center;">100</div>
<div class="t" style="left:25.6px;top:346.40px;font-size:8.7px;font-weight:bold;color:#111;transform:scaleX(0.8543);transform-origin:left center;">Total Revenue</div>
<div class="t" style="left:180.9px;top:346.40px;font-size:8.7px;font-weight:normal;color:#111;transform:scaleX(0.9057);transform-origin:left center;">$6,000</div>
<div class="t" style="left:25.6px;top:369.70px;font-size:8.7px;font-weight:bold;color:#111;transform:scaleX(0.8372);transform-origin:left center;">Total cost</div>
<div class="t" style="left:181.3px;top:369.70px;font-size:8.7px;font-weight:normal;color:#111;transform:scaleX(0.8907);transform-origin:left center;">$1,500</div>
<div class="t" style="left:25.6px;top:393.00px;font-size:8.7px;font-weight:bold;color:#111;transform:scaleX(0.8541);transform-origin:left center;">Profit</div>
<div class="t" style="left:181px;top:393.00px;font-size:8.7px;font-weight:normal;color:#111;transform:scaleX(0.9019);transform-origin:left center;">$4,500</div>
<div class="t" style="left:25.6px;top:404.65px;font-size:8.7px;font-weight:bold;color:#111;transform:scaleX(0.8663);transform-origin:left center;">Profit margin</div>
<div class="t" style="left:190px;top:404.65px;font-size:8.7px;font-weight:normal;color:#111;transform:scaleX(0.8614);transform-origin:left center;">75%</div>
<svg style="left:100px;top:200px;" width="115" height="35" viewBox="0 0 115 35"><rect x="5.3" y="7.9" width="101.9" height="19.6" fill="none" stroke="#356f4e" stroke-width="1.6"/><rect x="105" y="25.6" width="4" height="4" fill="#356f4e" stroke="#fff" stroke-width="0.8"/></svg>
<svg style="left:200px;top:200px;" width="90" height="80" viewBox="0 0 90 80"><polyline points="31.5,31.8 71.8,54.3 32.3,58.7" fill="none" stroke="#f7301a" stroke-width="5" stroke-linejoin="round"/><path d="M15.3 21.4 L36.7 24.2 L26.3 39.5 Z" fill="#f7301a" stroke="#f7301a" stroke-width="0.8" stroke-linejoin="round"/><path d="M13.2 60.3 L31.8 49.4 L32.9 68 Z" fill="#f7301a" stroke="#f7301a" stroke-width="0.8" stroke-linejoin="round"/></svg>
<svg style="left:170px;top:390px;" width="60" height="45" viewBox="0 0 60 45"><ellipse cx="29.1" cy="22.9" rx="20" ry="12.6" fill="none" stroke="#ec3a1e" stroke-width="4.2" transform="rotate(6 29.1 22.9)"/></svg>
<div style="left:759.4px;top:138.8px;width:7px;height:309.4px;background:#8e8e8e;border-radius:3.5px"></div>
<svg style="left:6px;top:604px;" width="30" height="16" viewBox="0 0 30 16"><path d="M9 4 L5 8 L9 12 Z" fill="#c4c4c4"/><path d="M20 4 L24 8 L20 12 Z" fill="#c4c4c4"/></svg>
<div style="left:42px;top:603px;width:1px;height:17px;background:#dadada"></div>
<div class="t" style="left:56px;top:607.90px;font-size:9px;font-weight:normal;color:#595959;">Scenario Summary</div>
<div style="left:146.8px;top:602px;width:56.5px;height:16.8px;background:#fff;border-radius:0 0 3px 3px;box-shadow:0 0.8px 1.2px rgba(0,0,0,0.2)"></div>
<div class="t" style="left:160.6px;top:607.20px;font-size:9px;font-weight:bold;color:#449468;transform:scaleX(0.9623);transform-origin:left center;">Sheet1</div>
<svg style="left:212px;top:606px;" width="12" height="12" viewBox="0 0 12 12"><path d="M6 1.8 V10.2 M1.8 6 H10.2" stroke="#555" stroke-width="1.5"/></svg>
<div style="left:231px;top:603px;width:1px;height:17px;background:#dadada"></div>
<div class="t" style="left:16.4px;top:625.16px;font-size:9.5px;font-weight:normal;color:#6a6a6a;transform:scaleX(0.9104);transform-origin:left center;">Ready</div>
<svg style="left:55px;top:621px;" width="14" height="16" viewBox="0 0 14 16"><circle cx="6" cy="4.6" r="1.7" fill="none" stroke="#7a7a7a" stroke-width="1.1"/><path d="M1.5 6.8 Q6 8.6 10.5 6.8 M6 8 V10.8 M3.8 14 L4.6 10.8 H7.6" fill="none" stroke="#7a7a7a" stroke-width="1.15" stroke-linecap="round"/><path d="M8.2 11.2 L11 14 M11 11.2 L8.2 14" stroke="#888" stroke-width="0.9"/></svg>
<div class="t" style="left:69.4px;top:625.16px;font-size:9.5px;font-weight:normal;color:#6a6a6a;transform:scaleX(0.9771);transform-origin:left center;">Accessibility: Investigate</div>
<svg style="left:545px;top:622px;" width="65" height="14" viewBox="0 0 65 14"><rect x="1.5" y="2.5" width="9" height="8" fill="none" stroke="#8c8c8c"/><path d="M1.5 5.2 H10.5 M1.5 7.8 H10.5 M4.5 2.5 V10.5 M7.5 2.5 V10.5" stroke="#8c8c8c" stroke-width="0.7"/><rect x="26.5" y="2.5" width="9" height="8" fill="none" stroke="#8c8c8c"/><rect x="28.5" y="4.5" width="5" height="4" fill="none" stroke="#8c8c8c" stroke-width="0.7"/><rect x="52.5" y="2.5" width="9" height="8" fill="none" stroke="#8c8c8c"/><path d="M52.5 6 H57 V2.5 M57 6 V10.5" fill="none" stroke="#8c8c8c" stroke-width="0.8"/></svg>
<div style="left:621px;top:629.5px;width:6px;height:1.3px;background:#777"></div>
<div style="left:633.2px;top:629.3px;width:71.2px;height:2px;background:#a9a9a9;border-radius:1px"></div>
<svg style="left:663px;top:624px;" width="13" height="13" viewBox="0 0 13 13"><circle cx="6.2" cy="6.2" r="4" fill="#fff" stroke="#cfcfcf" stroke-width="0.6"/></svg>
<svg style="left:708px;top:624px;" width="11" height="11" viewBox="0 0 11 11"><path d="M5.5 1.5 V9.5 M1.5 5.5 H9.5" stroke="#777" stroke-width="1.3"/></svg>
<div class="t" style="left:729.4px;top:625.70px;font-size:9px;font-weight:normal;color:#6a6a6a;transform:scaleX(0.9514);transform-origin:left center;">100%</div>
<div style="left:448.5px;top:156.5px;width:254.7px;height:315px;background:#ececec;border-radius:5px;box-shadow:0 0 0 0.5px rgba(0,0,0,0.12),0 10px 30px rgba(0,0,0,0.36)"></div>
<div style="left:448.5px;top:156.5px;width:254.7px;height:16px;background:linear-gradient(#e9e9e9,#d5d5d5);border-radius:5px 5px 0 0;border-bottom:1px solid #c4c4c4;box-sizing:border-box"></div>
<div class="t" style="left:535.6px;top:161.22px;font-size:10px;font-weight:normal;color:#474747;transform:scaleX(0.9729);transform-origin:left center;-webkit-text-stroke:0.1px currentColor;">Scenario Manager</div>
<div class="t" style="left:463.8px;top:189.62px;font-size:10px;font-weight:normal;color:#333;transform:scaleX(0.9525);transform-origin:left center;-webkit-text-stroke:0.1px currentColor;">Scenarios:</div>
<div style="left:461.6px;top:204.2px;width:228.4px;height:77.5px;background:#7ea6e0;border-radius:2px"></div>
<div style="left:464px;top:206.8px;width:223.3px;height:72.4px;background:#fff"></div>
<div style="left:463.5px;top:265.7px;width:212.8px;height:12.6px;background:#0b5cd5"></div>
<div style="left:676.3px;top:206.8px;width:11px;height:72.4px;background:#f7f7f7;border-left:1px solid #ececec;box-sizing:border-box"></div>
<div style="left:679.3px;top:218.3px;width:5.6px;height:58.5px;background:#b5b5b5;border-radius:3px"></div>
<div class="t" style="left:465.8px;top:212.66px;font-size:9.7px;font-weight:normal;color:#333;transform:scaleX(0.9920);transform-origin:left center;-webkit-text-stroke:0.1px currentColor;">Increase Price</div>
<div class="t" style="left:465.8px;top:226.06px;font-size:9.7px;font-weight:normal;color:#333;transform:scaleX(1.0079);transform-origin:left center;-webkit-text-stroke:0.1px currentColor;">Current</div>
<div class="t" style="left:465.8px;top:239.96px;font-size:9.7px;font-weight:normal;color:#333;-webkit-text-stroke:0.1px currentColor;">Reduce Labor Costs</div>
<div class="t" style="left:465.8px;top:253.76px;font-size:9.7px;font-weight:normal;color:#333;transform:scaleX(0.9885);transform-origin:left center;-webkit-text-stroke:0.1px currentColor;">Reduce Total Costs</div>
<div class="t" style="left:465.8px;top:267.56px;font-size:9.7px;font-weight:normal;color:#fff;-webkit-text-stroke:0.1px currentColor;">Increase Price/Reduce Costs</div>
<div style="left:463.5px;top:290.2px;width:30.5px;height:13.6px;background:#fafafa;box-shadow:0 0 0 0.8px #c9c9c9"></div>
<div style="left:478.6px;top:290.2px;width:0.8px;height:13.6px;background:#cfcfcf"></div>
<svg style="left:463.5px;top:290.2px;" width="31" height="14" viewBox="0 0 31 14"><path d="M7.7 2.8 V11 M3.6 6.9 H11.8" stroke="#4a4a4a" stroke-width="1.1"/><path d="M18.8 6.9 H27" stroke="#4a4a4a" stroke-width="1.1"/></svg>
<div style="left:524.2px;top:290.5px;width:45px;height:13.6px;background:#fff;border-radius:3px;box-shadow:0 0 0 0.6px rgba(0,0,0,0.17),0 0.8px 1px rgba(0,0,0,0.2)"></div>
<div class="t" style="left:533.4px;top:293.22px;font-size:10px;font-weight:normal;color:#333;transform:scaleX(0.9896);transform-origin:left center;-webkit-text-stroke:0.1px currentColor;">Edit...</div>
<div style="left:578.6px;top:290.5px;width:55.8px;height:13.6px;background:#fff;border-radius:3px;box-shadow:0 0 0 0.6px rgba(0,0,0,0.17),0 0.8px 1px rgba(0,0,0,0.2)"></div>
<div class="t" style="left:588.4px;top:293.22px;font-size:10px;font-weight:normal;color:#333;transform:scaleX(0.9787);transform-origin:left center;-webkit-text-stroke:0.1px currentColor;">Merge...</div>
<div style="left:644.2px;top:290.5px;width:44.1px;height:13.6px;background:#fff;border-radius:3px;box-shadow:0 0 0 0.6px rgba(0,0,0,0.17),0 0.8px 1px rgba(0,0,0,0.2)"></div>
<div class="t" style="left:654px;top:293.22px;font-size:10px;font-weight:normal;color:#333;transform:scaleX(0.9674);transform-origin:left center;-webkit-text-stroke:0.1px currentColor;">Show</div>
<div style="left:458px;top:320px;width:236px;height:1px;background:#d5d5d5"></div>
<div class="t" style="left:463.7px;top:332.12px;font-size:10px;font-weight:normal;color:#333;transform:scaleX(0.9697);transform-origin:left center;-webkit-text-stroke:0.1px currentColor;">Changing cells:</div>
<div class="t" style="left:466.6px;top:349.72px;font-size:10px;font-weight:normal;color:#333;transform:scaleX(0.9502);transform-origin:left center;-webkit-text-stroke:0.1px currentColor;">$C$7,$C$10,$C$11</div>
<div style="left:462.7px;top:370px;width:192px;height:18px;background:#fff"></div>
<div style="left:465.6px;top:387px;width:189.1px;height:32.5px;background:#fff"></div>
<div style="left:463.5px;top:443px;width:69.5px;height:14.2px;background:#fff;border-radius:3px;box-shadow:0 0 0 0.6px rgba(0,0,0,0.17),0 0.8px 1px rgba(0,0,0,0.2)"></div>
<div class="t" style="left:473.7px;top:446.01px;font-size:10px;font-weight:normal;color:#333;transform:scaleX(0.9468);transform-origin:left center;-webkit-text-stroke:0.1px currentColor;">Summary...</div>
<div style="left:643px;top:443px;width:45.7px;height:14.2px;background:#fff;border-radius:3px;box-shadow:0 0 0 0.6px rgba(0,0,0,0.17),0 0.8px 1px rgba(0,0,0,0.2)"></div>
<div class="t" style="left:653.1px;top:446.01px;font-size:10px;font-weight:normal;color:#333;transform:scaleX(0.9544);transform-origin:left center;-webkit-text-stroke:0.1px currentColor;">Close</div>
</body></html>
